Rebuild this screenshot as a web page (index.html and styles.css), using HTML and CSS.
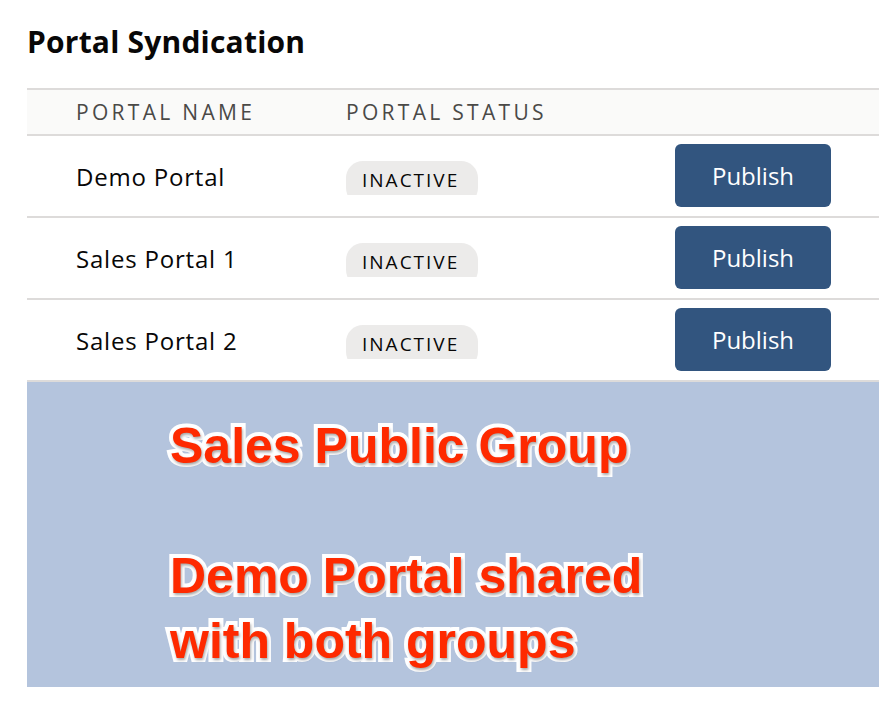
FILE: index.html
```html
<html>

<head>
    <meta charset="utf-8">
    <title>Portal Syndication</title>
    <link rel="stylesheet" href="styles.css">
</head>

<body>
    <div id="syndication">
        <h1 class="title">Portal Syndication</h1>
        <table class="portalTable">
            <thead>
                <tr>
                    <th class="nameCol">Portal Name</th>
                    <th class="statusCol">Portal Status</th>
                    <th class="actionCol"></th>
                </tr>
            </thead>
            <tbody>
                <tr>
                    <td class="nameCol">Demo Portal</td>
                    <td class="statusCol"><div class="badgeClip"><span class="badge">Inactive</span></div></td>
                    <td class="actionCol"><button class="publish">Publish</button></td>
                </tr>
                <tr>
                    <td class="nameCol">Sales Portal 1</td>
                    <td class="statusCol"><div class="badgeClip"><span class="badge">Inactive</span></div></td>
                    <td class="actionCol"><button class="publish">Publish</button></td>
                </tr>
                <tr>
                    <td class="nameCol">Sales Portal 2</td>
                    <td class="statusCol"><div class="badgeClip"><span class="badge">Inactive</span></div></td>
                    <td class="actionCol"><button class="publish">Publish</button></td>
                </tr>
            </tbody>
        </table>
        <!-- annotation overlay -->
        <div class="note">
            <div class="noteText">Sales Public Group</div>
            <div class="noteText">&nbsp;</div>
            <div class="noteText">Demo Portal shared</div>
            <div class="noteText">with both groups</div>
        </div>
    </div>
</body>

</html>
```

FILE: styles.css
```css
body {
    margin: 0;
    background: #ffffff;
    font-family: "Open Sans", Lato, sans-serif;
    color: #080707;
}

#syndication {
    width: 852px;
    padding: 20px 0 0 27px;
}

.title {
    margin: 0;
    font-size: 30px;
    line-height: 44px;
    font-weight: 700;
    letter-spacing: 0.2px;
}

.portalTable {
    width: 852px;
    margin-top: 24px;
    border-collapse: separate;
    border-spacing: 0;
}

.portalTable th {
    box-sizing: border-box;
    height: 48px;
    padding: 0;
    background: #fafaf9;
    border-top: 2px solid #dddbda;
    border-bottom: 2px solid #dddbda;
    text-align: left;
    font-weight: 400;
    font-size: 21px;
    letter-spacing: 3.3px;
    text-transform: uppercase;
    color: #4a4947;
}

.portalTable td {
    box-sizing: border-box;
    height: 82px;
    padding: 0;
    border-bottom: 2px solid #dddbda;
    font-size: 24px;
    letter-spacing: 0.8px;
}

.nameCol {
    width: 319px;
    padding-left: 49px !important;
}

.statusCol {
    width: 329px;
}

.badgeClip {
    display: inline-block;
    height: 34px;
    margin-top: 4px;
    overflow: hidden;
    vertical-align: middle;
}

.badge {
    display: block;
    width: 132px;
    height: 44px;
    padding: 6px 0 0 16px;
    box-sizing: border-box;
    border-radius: 17px;
    background: #ecebea;
    font-size: 19px;
    letter-spacing: 2px;
    text-transform: uppercase;
    color: #080707;
}

.publish {
    width: 156px;
    height: 63px;
    margin-top: -2px;
    border: none;
    border-radius: 6px;
    background: #32557f;
    color: #ffffff;
    font-family: "Open Sans", Lato, sans-serif;
    font-size: 24px;
    font-weight: 500;
}

.note {
    height: 273px;
    padding: 32px 0 0 143px;
    background: #b4c4dd;
}

.noteText {
    font-family: "Liberation Sans", Arial, sans-serif;
    font-weight: 700;
    font-size: 50px;
    line-height: 65px;
    color: #fe2a00;
    -webkit-text-stroke: 8px #ffffff;
    paint-order: stroke fill;
    text-shadow: 1px 2px 3px rgba(0, 0, 0, 0.35);
}
```
